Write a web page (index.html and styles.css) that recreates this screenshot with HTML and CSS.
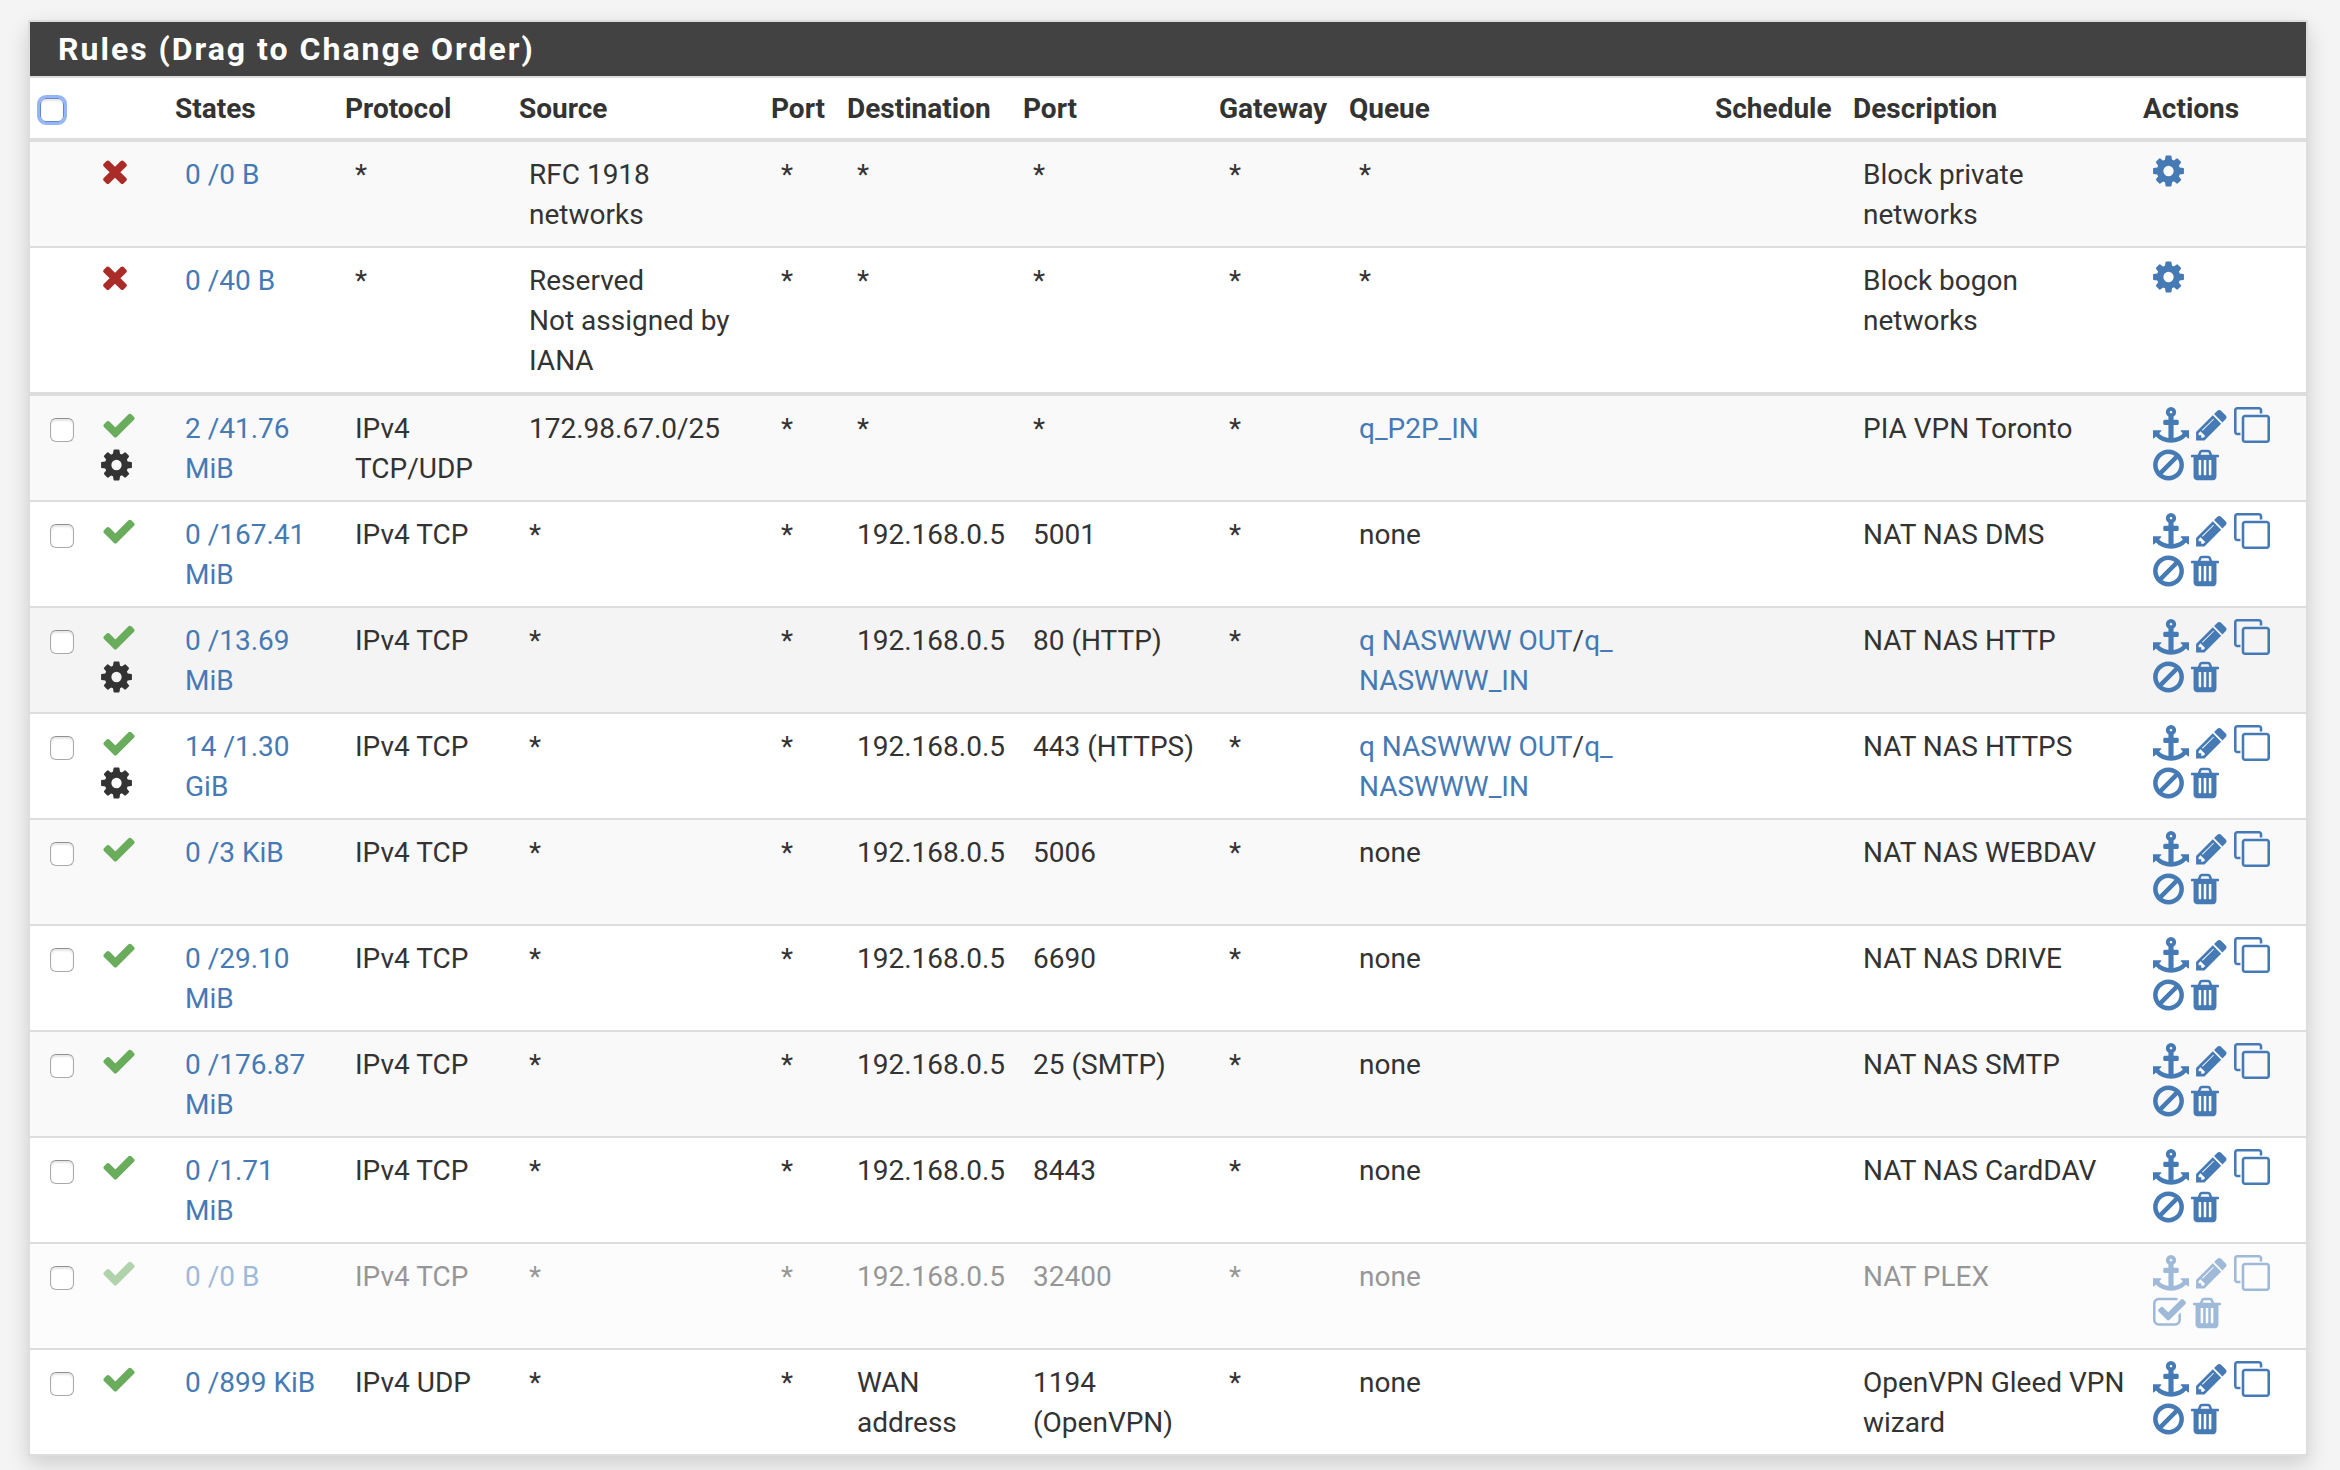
FILE: index.html
```html
<!DOCTYPE html>
<html lang="en">
<head>
    <meta charset="UTF-8">
    <meta name="viewport" content="width=device-width, initial-scale=1.0">
    <title>Firewall Rules</title>
    <link rel="stylesheet" href="styles.css">
</head>
<body>
    <!-- Icon definitions -->
    <svg class="sprite" aria-hidden="true">
        <symbol id="cog" viewBox="128 0 1536 1792"><path d="M1152 896q0-106-75-181t-181-75-181 75-75 181 75 181 181 75 181-75 75-181zm512-109v222q0 12-8 23t-20 13l-185 28q-19 54-39 91 35 50 107 138 10 12 10 25t-9 23q-27 37-99 108t-94 71q-12 0-26-9l-138-108q-44 23-91 38-16 136-29 186-7 28-36 28h-222q-14 0-24.500-8.500t-11.500-21.500l-28-184q-49-16-90-37l-141 107q-10 9-25 9-14 0-25-11-126-114-165-168-7-10-7-23 0-12 8-23 15-21 51-66.500t54-70.500q-27-50-41-99l-183-27q-13-2-21-12.500t-8-23.500v-222q0-12 8-23t19-13l186-28q14-46 39-92-40-57-107-138-10-12-10-24 0-10 9-23 26-36 98.500-107.500t94.500-71.500q13 0 26 10l138 107q44-23 91-38 16-136 29-186 7-28 36-28h222q14 0 24.500 8.500t11.500 21.500l28 184q49 16 90 37l142-107q9-9 24-9 13 0 25 10 129 119 165 170 7 8 7 22 0 12-8 23-15 21-51 66.500t-54 70.500q26 50 41 98l183 28q13 2 21 12.500t8 23.500z"/></symbol>
        <symbol id="check" viewBox="0 0 1792 1792"><path d="M1671 566q0 40-28 68l-724 724-136 136q-28 28-68 28t-68-28l-136-136-362-362q-28-28-28-68t28-68l136-136q28-28 68-28t68 28l294 295 656-657q28-28 68-28t68 28l136 136q28 28 28 68z"/></symbol>
        <symbol id="times" viewBox="192 0 1408 1792"><path d="M1490 1322q0 40-28 68l-136 136q-28 28-68 28t-68-28l-294-294-294 294q-28 28-68 28t-68-28l-136-136q-28-28-28-68t28-68l294-294-294-294q-28-28-28-68t28-68l136-136q28-28 68-28t68 28l294 294 294-294q28-28 68-28t68 28l136 136q28 28 28 68t-28 68l-294 294 294 294q28 28 28 68z"/></symbol>
        <symbol id="anchor" viewBox="0 0 1792 1792"><path d="M960 256q0-26-19-45t-45-19-45 19-19 45 19 45 45 19 45-19 19-45zm832 928v352q0 22-20 30-8 2-12 2-12 0-23-9l-93-93q-119 143-318.500 226.500t-429.500 83.500-429.500-83.500-318.500-226.500l-93 93q-9 9-23 9-4 0-12-2-20-8-20-30v-352q0-14 9-23t23-9h352q22 0 30 20 8 19-7 35l-100 100q67 91 189.500 153.500t271.500 82.500v-647h-192q-26 0-45-19t-19-45v-128q0-26 19-45t45-19h192v-163q-58-34-93-92.500t-35-128.500q0-106 75-181t181-75 181 75 75 181q0 70-35 128.500t-93 92.500v163h192q26 0 45 19t19 45v128q0 26-19 45t-45 19h-192v647q149-20 271.500-82.500t189.500-153.500l-100-100q-15-16-7-35 8-20 30-20h352q14 0 23 9t9 23z"/></symbol>
        <symbol id="pencil" viewBox="128 0 1536 1792"><path d="M491 1536l91-91-235-235-91 91v107h128v128h107zm523-928q0-22-22-22-10 0-17 7l-542 542q-7 7-7 17 0 22 22 22 10 0 17-7l542-542q7-7 7-17zm-54-192l416 416-832 832h-416v-416zm683 96q0 53-37 90l-166 166-416-416 166-165q36-38 90-38 53 0 91 38l235 234q37 39 37 91z"/></symbol>
        <symbol id="clone" viewBox="0 0 1792 1792"><path d="M1664 1632v-1088q0-13-9.500-22.500t-22.500-9.500h-1088q-13 0-22.500 9.500t-9.500 22.500v1088q0 13 9.500 22.500t22.500 9.500h1088q13 0 22.500-9.500t9.500-22.500zm128-1088v1088q0 66-47 113t-113 47h-1088q-66 0-113-47t-47-113v-1088q0-66 47-113t113-47h1088q66 0 113 47t47 113zm-384-384v160h-128v-160q0-13-9.500-22.500t-22.500-9.500h-1088q-13 0-22.500 9.500t-9.500 22.500v1088q0 13 9.500 22.500t22.500 9.500h160v128h-160q-66 0-113-47t-47-113v-1088q0-66 47-113t113-47h1088q66 0 113 47t47 113z"/></symbol>
        <symbol id="ban" viewBox="128 0 1536 1792"><path d="M1440 893q0-161-87-295l-754 753q137 89 297 89 111 0 211.500-43.500t173.500-116.500 116-174.500 43-212.500zm-999 299l755-754q-135-91-300-91-148 0-273 73t-198 199-73 274q0 162 89 299zm1223-299q0 157-61 300t-163.500 246-245 164-298.500 61-298.500-61-245-164-163.500-246-61-300 61-299.500 163.500-245.500 245-164 298.500-61 298.500 61 245 164 163.500 245.500 61 299.500z"/></symbol>
        <symbol id="trash" viewBox="192 0 1408 1792"><path d="M704 1376v-704q0-14-9-23t-23-9h-64q-14 0-23 9t-9 23v704q0 14 9 23t23 9h64q14 0 23-9t9-23zm256 0v-704q0-14-9-23t-23-9h-64q-14 0-23 9t-9 23v704q0 14 9 23t23 9h64q14 0 23-9t9-23zm256 0v-704q0-14-9-23t-23-9h-64q-14 0-23 9t-9 23v704q0 14 9 23t23 9h64q14 0 23-9t9-23zm-544-992h448l-48-117q-7-9-17-11h-317q-10 2-17 11zm928 32v64q0 14-9 23t-23 9h-96v948q0 83-47 143.500t-113 60.500h-832q-66 0-113-58.500t-47-141.500v-952h-96q-14 0-23-9t-9-23v-64q0-14 9-23t23-9h309l70-167q15-37 54-63t79-26h320q40 0 79 26t54 63l70 167h309q14 0 23 9t9 23z"/></symbol>
        <symbol id="check-square" viewBox="64 0 1664 1792"><path d="M1472 930v318q0 119-84.500 203.500t-203.500 84.500h-832q-119 0-203.500-84.500t-84.500-203.500v-832q0-119 84.500-203.500t203.500-84.500h832q63 0 117 25 15 7 18 23 3 17-9 29l-49 49q-10 10-23 10-3 0-9-2-23-6-45-6h-832q-66 0-113 47t-47 113v832q0 66 47 113t113 47h832q66 0 113-47t47-113v-254q0-13 9-22l64-64q10-10 23-10 6 0 12 3 20 8 20 29zm231-489l-814 814q-24 24-57 24t-57-24l-430-430q-24-24-24-57t24-57l110-110q24-24 57-24t57 24l263 263 647-647q24-24 57-24t57 24l110 110q24 24 24 57t-24 57z"/></symbol>
    </svg>

    <section class="panel">
        <h2 class="panel-heading">Rules (Drag to Change Order)</h2>
        <table class="rules">
            <colgroup>
                <col class="col-select">
                <col class="col-status">
                <col class="col-states">
                <col class="col-protocol">
                <col class="col-source">
                <col class="col-source-port">
                <col class="col-destination">
                <col class="col-port">
                <col class="col-gateway">
                <col class="col-queue">
                <col class="col-schedule">
                <col class="col-description">
                <col class="col-actions">
            </colgroup>
            <thead>
                <tr>
                    <th><input type="checkbox" class="select-all" aria-label="Select all rules"></th>
                    <th></th>
                    <th>States</th>
                    <th>Protocol</th>
                    <th>Source</th>
                    <th>Port</th>
                    <th>Destination</th>
                    <th>Port</th>
                    <th>Gateway</th>
                    <th>Queue</th>
                    <th>Schedule</th>
                    <th>Description</th>
                    <th>Actions</th>
                </tr>
            </thead>

            <!-- Built-in rules -->
            <tbody>
                <tr>
                    <td></td>
                    <td><svg class="icon icon-md block"><use href="#times"/></svg></td>
                    <td><a href="#">0 /0 B</a></td>
                    <td>*</td>
                    <td>RFC 1918 networks</td>
                    <td>*</td>
                    <td>*</td>
                    <td>*</td>
                    <td>*</td>
                    <td>*</td>
                    <td></td>
                    <td class="description">Block private networks</td>
                    <td><a href="#" aria-label="Settings"><svg class="icon"><use href="#cog"/></svg></a></td>
                </tr>
                <tr>
                    <td></td>
                    <td><svg class="icon icon-md block"><use href="#times"/></svg></td>
                    <td><a href="#">0 /40 B</a></td>
                    <td>*</td>
                    <td>Reserved<br>Not assigned by IANA</td>
                    <td>*</td>
                    <td>*</td>
                    <td>*</td>
                    <td>*</td>
                    <td>*</td>
                    <td></td>
                    <td class="description">Block bogon networks</td>
                    <td><a href="#" aria-label="Settings"><svg class="icon"><use href="#cog"/></svg></a></td>
                </tr>
            </tbody>

            <!-- User rules -->
            <tbody class="user-rules">
                <tr>
                    <td><input type="checkbox" aria-label="Select PIA VPN Toronto"></td>
                    <td><svg class="icon icon-lg pass"><use href="#check"/></svg> <svg class="icon"><use href="#cog"/></svg></td>
                    <td><a href="#">2 /41.76 MiB</a></td>
                    <td>IPv4 TCP/UDP</td>
                    <td>172.98.67.0/25</td>
                    <td>*</td>
                    <td>*</td>
                    <td>*</td>
                    <td>*</td>
                    <td><a href="#">q_P2P_IN</a></td>
                    <td></td>
                    <td class="description">PIA VPN Toronto</td>
                    <td>
                        <a href="#" aria-label="Anchor"><svg class="icon icon-lg"><use href="#anchor"/></svg></a>
                        <a href="#" aria-label="Edit"><svg class="icon"><use href="#pencil"/></svg></a>
                        <a href="#" aria-label="Copy"><svg class="icon icon-lg"><use href="#clone"/></svg></a>
                        <a href="#" aria-label="Disable"><svg class="icon"><use href="#ban"/></svg></a>
                        <a href="#" aria-label="Delete"><svg class="icon icon-md"><use href="#trash"/></svg></a>
                    </td>
                </tr>
                <tr>
                    <td><input type="checkbox" aria-label="Select NAT NAS DMS"></td>
                    <td><svg class="icon icon-lg pass"><use href="#check"/></svg></td>
                    <td><a href="#">0 /167.41 MiB</a></td>
                    <td>IPv4 TCP</td>
                    <td>*</td>
                    <td>*</td>
                    <td>192.168.0.5</td>
                    <td>5001</td>
                    <td>*</td>
                    <td>none</td>
                    <td></td>
                    <td class="description">NAT NAS DMS</td>
                    <td>
                        <a href="#" aria-label="Anchor"><svg class="icon icon-lg"><use href="#anchor"/></svg></a>
                        <a href="#" aria-label="Edit"><svg class="icon"><use href="#pencil"/></svg></a>
                        <a href="#" aria-label="Copy"><svg class="icon icon-lg"><use href="#clone"/></svg></a>
                        <a href="#" aria-label="Disable"><svg class="icon"><use href="#ban"/></svg></a>
                        <a href="#" aria-label="Delete"><svg class="icon icon-md"><use href="#trash"/></svg></a>
                    </td>
                </tr>
                <tr class="active">
                    <td><input type="checkbox" aria-label="Select NAT NAS HTTP"></td>
                    <td><svg class="icon icon-lg pass"><use href="#check"/></svg> <svg class="icon"><use href="#cog"/></svg></td>
                    <td><a href="#">0 /13.69 MiB</a></td>
                    <td>IPv4 TCP</td>
                    <td>*</td>
                    <td>*</td>
                    <td>192.168.0.5</td>
                    <td>80 (HTTP)</td>
                    <td>*</td>
                    <td><a href="#">q NASWWW OUT</a>/<a href="#">q_<wbr>NASWWW_IN</a></td>
                    <td></td>
                    <td class="description">NAT NAS HTTP</td>
                    <td>
                        <a href="#" aria-label="Anchor"><svg class="icon icon-lg"><use href="#anchor"/></svg></a>
                        <a href="#" aria-label="Edit"><svg class="icon"><use href="#pencil"/></svg></a>
                        <a href="#" aria-label="Copy"><svg class="icon icon-lg"><use href="#clone"/></svg></a>
                        <a href="#" aria-label="Disable"><svg class="icon"><use href="#ban"/></svg></a>
                        <a href="#" aria-label="Delete"><svg class="icon icon-md"><use href="#trash"/></svg></a>
                    </td>
                </tr>
                <tr>
                    <td><input type="checkbox" aria-label="Select NAT NAS HTTPS"></td>
                    <td><svg class="icon icon-lg pass"><use href="#check"/></svg> <svg class="icon"><use href="#cog"/></svg></td>
                    <td><a href="#">14 /1.30 GiB</a></td>
                    <td>IPv4 TCP</td>
                    <td>*</td>
                    <td>*</td>
                    <td>192.168.0.5</td>
                    <td>443 (HTTPS)</td>
                    <td>*</td>
                    <td><a href="#">q NASWWW OUT</a>/<a href="#">q_<wbr>NASWWW_IN</a></td>
                    <td></td>
                    <td class="description">NAT NAS HTTPS</td>
                    <td>
                        <a href="#" aria-label="Anchor"><svg class="icon icon-lg"><use href="#anchor"/></svg></a>
                        <a href="#" aria-label="Edit"><svg class="icon"><use href="#pencil"/></svg></a>
                        <a href="#" aria-label="Copy"><svg class="icon icon-lg"><use href="#clone"/></svg></a>
                        <a href="#" aria-label="Disable"><svg class="icon"><use href="#ban"/></svg></a>
                        <a href="#" aria-label="Delete"><svg class="icon icon-md"><use href="#trash"/></svg></a>
                    </td>
                </tr>
                <tr>
                    <td><input type="checkbox" aria-label="Select NAT NAS WEBDAV"></td>
                    <td><svg class="icon icon-lg pass"><use href="#check"/></svg></td>
                    <td><a href="#">0 /3 KiB</a></td>
                    <td>IPv4 TCP</td>
                    <td>*</td>
                    <td>*</td>
                    <td>192.168.0.5</td>
                    <td>5006</td>
                    <td>*</td>
                    <td>none</td>
                    <td></td>
                    <td class="description">NAT NAS WEBDAV</td>
                    <td>
                        <a href="#" aria-label="Anchor"><svg class="icon icon-lg"><use href="#anchor"/></svg></a>
                        <a href="#" aria-label="Edit"><svg class="icon"><use href="#pencil"/></svg></a>
                        <a href="#" aria-label="Copy"><svg class="icon icon-lg"><use href="#clone"/></svg></a>
                        <a href="#" aria-label="Disable"><svg class="icon"><use href="#ban"/></svg></a>
                        <a href="#" aria-label="Delete"><svg class="icon icon-md"><use href="#trash"/></svg></a>
                    </td>
                </tr>
                <tr>
                    <td><input type="checkbox" aria-label="Select NAT NAS DRIVE"></td>
                    <td><svg class="icon icon-lg pass"><use href="#check"/></svg></td>
                    <td><a href="#">0 /29.10 MiB</a></td>
                    <td>IPv4 TCP</td>
                    <td>*</td>
                    <td>*</td>
                    <td>192.168.0.5</td>
                    <td>6690</td>
                    <td>*</td>
                    <td>none</td>
                    <td></td>
                    <td class="description">NAT NAS DRIVE</td>
                    <td>
                        <a href="#" aria-label="Anchor"><svg class="icon icon-lg"><use href="#anchor"/></svg></a>
                        <a href="#" aria-label="Edit"><svg class="icon"><use href="#pencil"/></svg></a>
                        <a href="#" aria-label="Copy"><svg class="icon icon-lg"><use href="#clone"/></svg></a>
                        <a href="#" aria-label="Disable"><svg class="icon"><use href="#ban"/></svg></a>
                        <a href="#" aria-label="Delete"><svg class="icon icon-md"><use href="#trash"/></svg></a>
                    </td>
                </tr>
                <tr>
                    <td><input type="checkbox" aria-label="Select NAT NAS SMTP"></td>
                    <td><svg class="icon icon-lg pass"><use href="#check"/></svg></td>
                    <td><a href="#">0 /176.87 MiB</a></td>
                    <td>IPv4 TCP</td>
                    <td>*</td>
                    <td>*</td>
                    <td>192.168.0.5</td>
                    <td>25 (SMTP)</td>
                    <td>*</td>
                    <td>none</td>
                    <td></td>
                    <td class="description">NAT NAS SMTP</td>
                    <td>
                        <a href="#" aria-label="Anchor"><svg class="icon icon-lg"><use href="#anchor"/></svg></a>
                        <a href="#" aria-label="Edit"><svg class="icon"><use href="#pencil"/></svg></a>
                        <a href="#" aria-label="Copy"><svg class="icon icon-lg"><use href="#clone"/></svg></a>
                        <a href="#" aria-label="Disable"><svg class="icon"><use href="#ban"/></svg></a>
                        <a href="#" aria-label="Delete"><svg class="icon icon-md"><use href="#trash"/></svg></a>
                    </td>
                </tr>
                <tr>
                    <td><input type="checkbox" aria-label="Select NAT NAS CardDAV"></td>
                    <td><svg class="icon icon-lg pass"><use href="#check"/></svg></td>
                    <td><a href="#">0 /1.71 MiB</a></td>
                    <td>IPv4 TCP</td>
                    <td>*</td>
                    <td>*</td>
                    <td>192.168.0.5</td>
                    <td>8443</td>
                    <td>*</td>
                    <td>none</td>
                    <td></td>
                    <td class="description">NAT NAS CardDAV</td>
                    <td>
                        <a href="#" aria-label="Anchor"><svg class="icon icon-lg"><use href="#anchor"/></svg></a>
                        <a href="#" aria-label="Edit"><svg class="icon"><use href="#pencil"/></svg></a>
                        <a href="#" aria-label="Copy"><svg class="icon icon-lg"><use href="#clone"/></svg></a>
                        <a href="#" aria-label="Disable"><svg class="icon"><use href="#ban"/></svg></a>
                        <a href="#" aria-label="Delete"><svg class="icon icon-md"><use href="#trash"/></svg></a>
                    </td>
                </tr>
                <tr class="disabled">
                    <td><input type="checkbox" aria-label="Select NAT PLEX"></td>
                    <td><svg class="icon icon-lg pass"><use href="#check"/></svg></td>
                    <td><a href="#">0 /0 B</a></td>
                    <td>IPv4 TCP</td>
                    <td>*</td>
                    <td>*</td>
                    <td>192.168.0.5</td>
                    <td>32400</td>
                    <td>*</td>
                    <td>none</td>
                    <td></td>
                    <td class="description">NAT PLEX</td>
                    <td>
                        <a href="#" aria-label="Anchor"><svg class="icon icon-lg"><use href="#anchor"/></svg></a>
                        <a href="#" aria-label="Edit"><svg class="icon"><use href="#pencil"/></svg></a>
                        <a href="#" aria-label="Copy"><svg class="icon icon-lg"><use href="#clone"/></svg></a>
                        <a href="#" aria-label="Enable"><svg class="icon icon-box"><use href="#check-square"/></svg></a>
                        <a href="#" aria-label="Delete"><svg class="icon icon-md"><use href="#trash"/></svg></a>
                    </td>
                </tr>
                <tr>
                    <td><input type="checkbox" aria-label="Select OpenVPN Gleed VPN wizard"></td>
                    <td><svg class="icon icon-lg pass"><use href="#check"/></svg></td>
                    <td><a href="#">0 /899 KiB</a></td>
                    <td>IPv4 UDP</td>
                    <td>*</td>
                    <td>*</td>
                    <td>WAN address</td>
                    <td>1194 (OpenVPN)</td>
                    <td>*</td>
                    <td>none</td>
                    <td></td>
                    <td class="description">OpenVPN Gleed VPN wizard</td>
                    <td>
                        <a href="#" aria-label="Anchor"><svg class="icon icon-lg"><use href="#anchor"/></svg></a>
                        <a href="#" aria-label="Edit"><svg class="icon"><use href="#pencil"/></svg></a>
                        <a href="#" aria-label="Copy"><svg class="icon icon-lg"><use href="#clone"/></svg></a>
                        <a href="#" aria-label="Disable"><svg class="icon"><use href="#ban"/></svg></a>
                        <a href="#" aria-label="Delete"><svg class="icon icon-md"><use href="#trash"/></svg></a>
                    </td>
                </tr>
            </tbody>
        </table>
    </section>
</body>
</html>
```
FILE: styles.css
```css
* {
    box-sizing: border-box;
}

body {
    margin: 0;
    padding: 20px 32px 14px 28px;
    font-family: Roboto, Arial, sans-serif;
    font-size: 28px;
    line-height: 40px;
    color: #333;
    background-color: #f4f4f4;
}

.sprite {
    display: none;
}

a {
    color: #457ab5;
    text-decoration: none;
}

a:hover {
    text-decoration: underline;
}

.panel {
    background-color: white;
    border: 2px solid #ddd;
    box-shadow: 0 8px 20px rgba(0, 0, 0, 0.16);
}

.panel-heading {
    margin: 0;
    padding: 7px 28px;
    border-bottom: 2px solid #ddd;
    background-color: #424242;
    color: white;
    font-size: 32px;
    font-weight: 700;
    letter-spacing: 2px;
}

/* Rules table */
.rules {
    width: 100%;
    table-layout: fixed;
    border-collapse: collapse;
}

.rules th {
    padding: 11px 5px 9px;
    border-bottom: 4px solid #ddd;
    text-align: left;
    vertical-align: top;
    font-weight: 700;
}

.rules td {
    padding: 13px 14px 11px 15px;
    vertical-align: top;
    border-top: 2px solid #ddd;
}

.rules .description {
    padding-right: 8px;
}

.rules tbody tr:nth-child(odd) {
    background-color: #f9f9f9;
}

.rules .user-rules {
    border-top: 4px solid #ddd;
}

.rules tbody tr.active {
    background-color: #f4f4f4;
}

.rules tbody tr.disabled {
    background-color: #fcfcfc;
}

.disabled td:not(:first-child) {
    opacity: 0.5;
}

.col-select { width: 56px; }
.col-status { width: 84px; }
.col-states { width: 170px; }
.col-protocol { width: 174px; }
.col-source { width: 252px; }
.col-source-port { width: 76px; }
.col-destination { width: 176px; }
.col-port { width: 196px; }
.col-gateway { width: 130px; }
.col-schedule { width: 138px; }
.col-description { width: 290px; }
.col-actions { width: 168px; }

/* Checkboxes */
input[type="checkbox"] {
    appearance: none;
    display: block;
    width: 24px;
    height: 24px;
    margin: 9px 5px 0;
    border: 1px solid #aaa;
    border-top-color: #909090;
    border-radius: 6px;
    background-color: white;
    box-shadow: inset 0 2px 2px rgba(0, 0, 0, 0.1);
}

.select-all {
    outline: 3px solid #94b6f8;
}

input.select-all {
    border-color: #6288c8;
}

input[type="checkbox"]:checked {
    background-color: #457ab5;
}

/* Icons */
.icon {
    width: 31px;
    height: 36px;
    margin: -4px 0;
    vertical-align: -1px;
    fill: currentColor;
}

.icon-md {
    width: 28px;
}

.icon-lg {
    width: 36px;
}

.icon-box {
    width: 33px;
}

.pass {
    color: #68ac5c;
}

.block {
    color: #a92c28;
}
```
